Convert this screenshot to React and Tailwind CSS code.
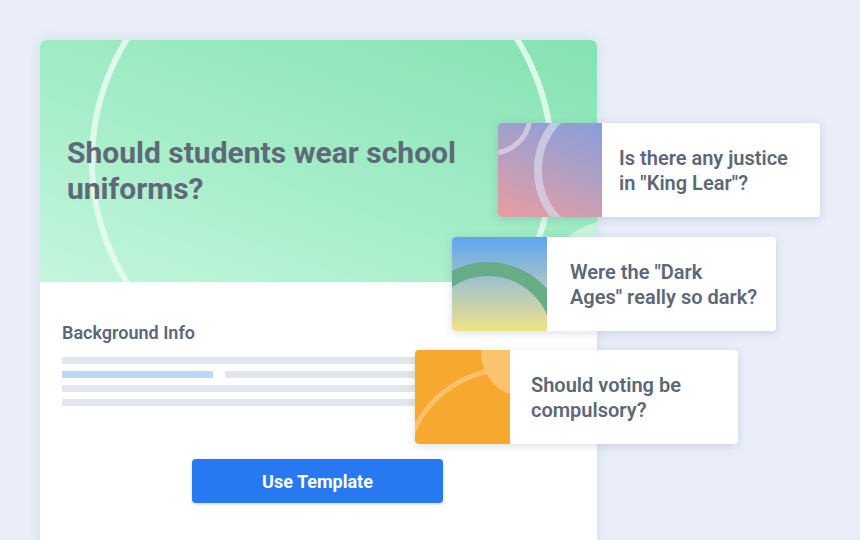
import React from "react";

function Card({ className, image, lines, imgW, pad }) {
  return (
    <div className={"absolute flex h-[94px] overflow-hidden rounded-[4px] bg-white shadow-[0_2px_10px_rgba(60,80,120,0.18)] " + className}>
      <div className={"relative h-full shrink-0 overflow-hidden " + imgW}>{image}</div>
      <div className={"flex flex-1 flex-col justify-center pt-[2px] text-[20px] font-semibold leading-[25px] text-[#5d6877] " + pad}>
        {lines.map((l, i) => (
          <div key={i} className="whitespace-nowrap">{l}</div>
        ))}
      </div>
    </div>
  );
}

export default function App() {
  return (
    <div className="relative h-[540px] w-[860px] overflow-hidden bg-[#e9eef9] font-['Roboto',sans-serif]">
      <div className="absolute left-[40px] top-[40px] h-[540px] w-[557px] overflow-hidden rounded-t-[6px] bg-white shadow-[0_0_14px_rgba(60,80,120,0.12)]">
        <div className="relative h-[242px] overflow-hidden bg-[linear-gradient(200deg,#85e2b2_0%,#a4edc8_55%,#c4f6dd_100%)]">
          <svg className="absolute left-0 top-0" width="557" height="242" viewBox="0 0 557 242">
            <circle cx="282" cy="121" r="230" fill="none" stroke="#e8fcf1" strokeWidth="6" opacity="0.85" />
            <circle cx="575" cy="255" r="75" fill="#ffffff" opacity="0.45" />
          </svg>
          <div className="relative pl-[27px] pt-[95px] text-[30px] font-bold leading-[36px] text-[#5f6a78]">
            Should students wear school
            <br />
            uniforms?
          </div>
        </div>
        <div className="px-[22px] pt-[40px]">
          <div className="text-[18px] font-semibold leading-[22px] text-[#5d6877]">Background Info</div>
          <div className="mt-[13px] flex flex-col gap-[7px]">
            <div className="h-[7px] w-[480px] bg-[#e3e6ea]" />
            <div className="flex gap-[12px]">
              <div className="h-[7px] w-[151px] bg-[#bcd8f5]" />
              <div className="h-[7px] w-[317px] bg-[#e3e6ea]" />
            </div>
            <div className="h-[7px] w-[480px] bg-[#e3e6ea]" />
            <div className="h-[7px] w-[480px] bg-[#e3e6ea]" />
          </div>
          <div className="mt-[53px] flex justify-center">
            <button className="ml-[-2px] h-[44px] w-[251px] rounded-[4px] bg-[#2879f1] text-[18px] font-bold text-white shadow-[0_1px_3px_rgba(40,100,200,0.3)]">
              Use Template
            </button>
          </div>
        </div>
      </div>

      <Card
        className="left-[498px] top-[123px] w-[322px]"
        imgW="w-[104px]"
        pad="pl-[17px]"
        lines={["Is there any justice", 'in "King Lear"?']}
        image={
          <div className="h-full w-full bg-[linear-gradient(200deg,#879fdc_0%,#b69fc0_50%,#e99d9f_100%)]">
            <svg className="absolute left-0 top-0" width="104" height="94" viewBox="0 0 104 94">
              <circle cx="-6" cy="-8" r="38" fill="none" stroke="#e6d6ea" strokeWidth="5" opacity="0.7" />
              <circle cx="112" cy="47" r="72" fill="none" stroke="#d6d4ea" strokeWidth="8" opacity="0.75" />
            </svg>
          </div>
        }
      />
      <Card
        className="left-[452px] top-[237px] w-[324px]"
        imgW="w-[95px]"
        pad="pl-[23px]"
        lines={['Were the "Dark', 'Ages" really so dark?']}
        image={
          <div className="h-full w-full bg-[linear-gradient(180deg,#5ea6f1_0%,#a7c4c6_50%,#f0e38b_100%)]">
            <svg className="absolute left-0 top-0" width="95" height="94" viewBox="0 0 95 94">
              <circle cx="36" cy="103" r="71" fill="none" stroke="#67ad88" strokeWidth="14" />
            </svg>
          </div>
        }
      />
      <Card
        className="left-[415px] top-[350px] w-[323px]"
        imgW="w-[95px]"
        pad="pl-[21px]"
        lines={["Should voting be", "compulsory?"]}
        image={
          <div className="h-full w-full bg-[#f6a82f]">
            <svg className="absolute left-0 top-0" width="95" height="94" viewBox="0 0 95 94">
              <circle cx="95" cy="125" r="106" fill="none" stroke="#f9c475" strokeWidth="5" opacity="0.85" />
              <circle cx="112" cy="2" r="46" fill="#fac36c" />
            </svg>
          </div>
        }
      />
    </div>
  );
}
